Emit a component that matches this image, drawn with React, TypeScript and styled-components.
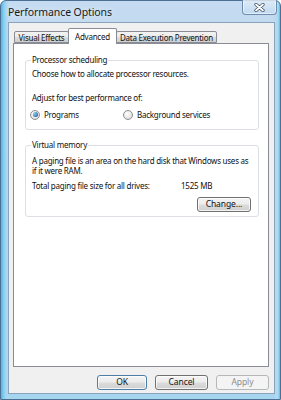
import React from 'react';
import styled, { createGlobalStyle } from 'styled-components';

const GlobalStyle = createGlobalStyle`
  html, body {
    margin: 0;
    padding: 0;
    background: #ffffff;
  }
  body {
    font-family: "Noto Sans", "DejaVu Sans", sans-serif;
    font-size: 8px;
    letter-spacing: -0.24px;
    color: #111;
  }
`;

const Frame = styled.div`
  width: 281px;
  height: 400px;
  box-sizing: border-box;
  display: flex;
  flex-direction: column;
  padding: 0 5px 5px 7px;
  border-radius: 6px 6px 0 0;
  background:
    linear-gradient(90deg, #5fb0de 0px, #7fd6f4 3px, #b8d4ee 6px, rgba(184, 212, 238, 0) 8px),
    linear-gradient(270deg, #6fb4e0 0px, #9fe0f6 2px, #bcd6ee 4px, rgba(188, 214, 238, 0) 6px),
    linear-gradient(180deg, #c4dbf1 0%, #bad4ee 40%, #a6d6ef 100%);
  border: 1px solid #4d6f94;
`;

const TitleBar = styled.div`
  height: 21px;
  display: flex;
  align-items: flex-start;
  justify-content: space-between;
`;

const Title = styled.div`
  padding-top: 4px;
  font-size: 10.5px;
  letter-spacing: -0.1px;
  color: #1a1a1a;
  text-shadow: 0 0 6px rgba(255, 255, 255, 0.9);
`;

const CloseButton = styled.div`
  width: 35px;
  height: 15px;
  margin-top: -1px;
  margin-right: -2px;
  box-sizing: border-box;
  display: flex;
  align-items: center;
  justify-content: center;
  border: 1px solid #6e8dae;
  border-top: none;
  border-radius: 0 0 4px 4px;
  background: linear-gradient(180deg, rgba(255, 255, 255, 0.45), rgba(190, 215, 240, 0.35));
  box-shadow: inset 0 0 0 1px rgba(255, 255, 255, 0.5);
`;

const Client = styled.div`
  flex: 1;
  display: flex;
  flex-direction: column;
  background: #f0f0f0;
  border: 1px solid #8ba2bc;
  padding: 5px 5px 0 4px;
`;

const TabRow = styled.div`
  display: flex;
  align-items: flex-end;
  height: 15px;
  padding-left: 1px;
  position: relative;
  z-index: 1;
`;

const Tab = styled.div<{ $active?: boolean; $width: number }>`
  box-sizing: border-box;
  width: ${p => p.$width}px;
  height: ${p => (p.$active ? '16px' : '12px')};
  margin-left: ${p => (p.$active ? '-1px' : '0')};
  margin-right: ${p => (p.$active ? '-1px' : '0')};
  margin-bottom: ${p => (p.$active ? '-1px' : '0')};
  display: flex;
  align-items: center;
  justify-content: center;
  white-space: nowrap;
  border: 1px solid #898c95;
  border-bottom: ${p => (p.$active ? 'none' : '1px solid #898c95')};
  border-radius: 2px 2px 0 0;
  background: ${p =>
    p.$active ? '#ffffff' : 'linear-gradient(180deg, #f2f2f2 0%, #ebebeb 50%, #dddddd 51%, #cfcfcf 100%)'};
`;

const Panel = styled.div`
  height: 324px;
  box-sizing: border-box;
  background: #ffffff;
  border: 1px solid #898c95;
  padding: 10px 9px 0 11px;
  display: flex;
  flex-direction: column;
  gap: 9px;
`;

const Group = styled.fieldset<{ $height: number }>`
  margin: 0;
  height: ${p => p.$height}px;
  box-sizing: border-box;
  border: 1px solid #dcdfe3;
  border-radius: 3px;
  padding: 0 6px;
  min-width: 0;
`;

const Legend = styled.legend`
  padding: 0 1px;
  margin-left: -1px;
  line-height: 12px;
`;

const Line = styled.div<{ $top?: number }>`
  margin-top: ${p => p.$top ?? 0}px;
  line-height: 9.5px;
  white-space: nowrap;
`;

const RadioRow = styled.div`
  display: flex;
  align-items: center;
  margin-top: 7px;
  margin-left: -2px;
`;

const RadioLabel = styled.label<{ $width?: number }>`
  display: flex;
  align-items: center;
  gap: 4px;
  width: ${p => (p.$width ? `${p.$width}px` : 'auto')};
`;

const RadioCircle = styled.span<{ $checked?: boolean }>`
  width: 10px;
  height: 10px;
  box-sizing: border-box;
  border-radius: 50%;
  border: 1px solid #8e8f8f;
  background: radial-gradient(circle at 40% 35%, #ffffff 0%, #e6e6e6 60%, #cfcfcf 100%);
  display: flex;
  align-items: center;
  justify-content: center;
  &::after {
    content: '';
    display: ${p => (p.$checked ? 'block' : 'none')};
    width: 5px;
    height: 5px;
    border-radius: 50%;
    background: radial-gradient(circle at 35% 35%, #9ad0f5 0%, #2c6fb0 70%, #1b4f8a 100%);
  }
`;

const InfoRow = styled.div`
  display: flex;
  margin-top: 6px;
  line-height: 9.5px;
`;

const InfoLabel = styled.span`
  width: 149px;
`;

const ChangeRow = styled.div`
  display: flex;
  justify-content: flex-end;
  margin-top: 6px;
  padding-right: 1px;
`;

const Button = styled.button<{ $default?: boolean; $width: number }>`
  width: ${p => p.$width}px;
  height: 15px;
  padding: 0;
  font-family: inherit;
  font-size: 8.5px;
  letter-spacing: -0.1px;
  line-height: 1;
  color: ${p => (p.disabled ? '#8d8d8d' : '#111')};
  border: 1px solid ${p => (p.disabled ? '#b5b8ba' : p.$default ? '#4d7ea8' : '#707070')};
  border-radius: 3px;
  background: ${p =>
    p.disabled
      ? '#f4f4f4'
      : 'linear-gradient(180deg, #f4f4f4 0%, #ececec 48%, #dcdcdc 52%, #cfcfcf 100%)'};
  box-shadow: inset 0 0 0 1px ${p => (p.disabled ? 'transparent' : 'rgba(255, 255, 255, 0.75)')};
`;

const ButtonBar = styled.div`
  display: flex;
  justify-content: flex-end;
  gap: 8px;
  padding: 8px 0 0;
`;

const App: React.FC = () => {
  return (
    <>
      <GlobalStyle />
      <Frame>
        <TitleBar>
          <Title>Performance Options</Title>
          <CloseButton>
            <svg width="11" height="9" viewBox="0 0 11 9">
              <path d="M2 1.5 L9 7.5 M9 1.5 L2 7.5" stroke="#3b4a5c" strokeWidth="3.2" strokeLinecap="round" />
              <path d="M2 1.5 L9 7.5 M9 1.5 L2 7.5" stroke="#ffffff" strokeWidth="1.8" strokeLinecap="round" />
            </svg>
          </CloseButton>
        </TitleBar>
        <Client>
          <TabRow>
            <Tab $width={55}>Visual Effects</Tab>
            <Tab $width={49} $active>Advanced</Tab>
            <Tab $width={101}>Data Execution Prevention</Tab>
          </TabRow>
          <Panel>
            <Group $height={76}>
              <Legend>Processor scheduling</Legend>
              <Line $top={3}>Choose how to allocate processor resources.</Line>
              <Line $top={14}>Adjust for best performance of:</Line>
              <RadioRow>
                <RadioLabel $width={93}>
                  <RadioCircle $checked />
                  Programs
                </RadioLabel>
                <RadioLabel>
                  <RadioCircle />
                  Background services
                </RadioLabel>
              </RadioRow>
            </Group>
            <Group $height={78}>
              <Legend>Virtual memory</Legend>
              <Line $top={5}>A paging file is an area on the hard disk that Windows uses as</Line>
              <Line>if it were RAM.</Line>
              <InfoRow>
                <InfoLabel>Total paging file size for all drives:</InfoLabel>
                <span>1525 MB</span>
              </InfoRow>
              <ChangeRow>
                <Button $width={54}>Change...</Button>
              </ChangeRow>
            </Group>
          </Panel>
          <ButtonBar>
            <Button $default $width={50}>OK</Button>
            <Button $width={53}>Cancel</Button>
            <Button $width={53} disabled>Apply</Button>
          </ButtonBar>
        </Client>
      </Frame>
    </>
  );
};

export default App;
